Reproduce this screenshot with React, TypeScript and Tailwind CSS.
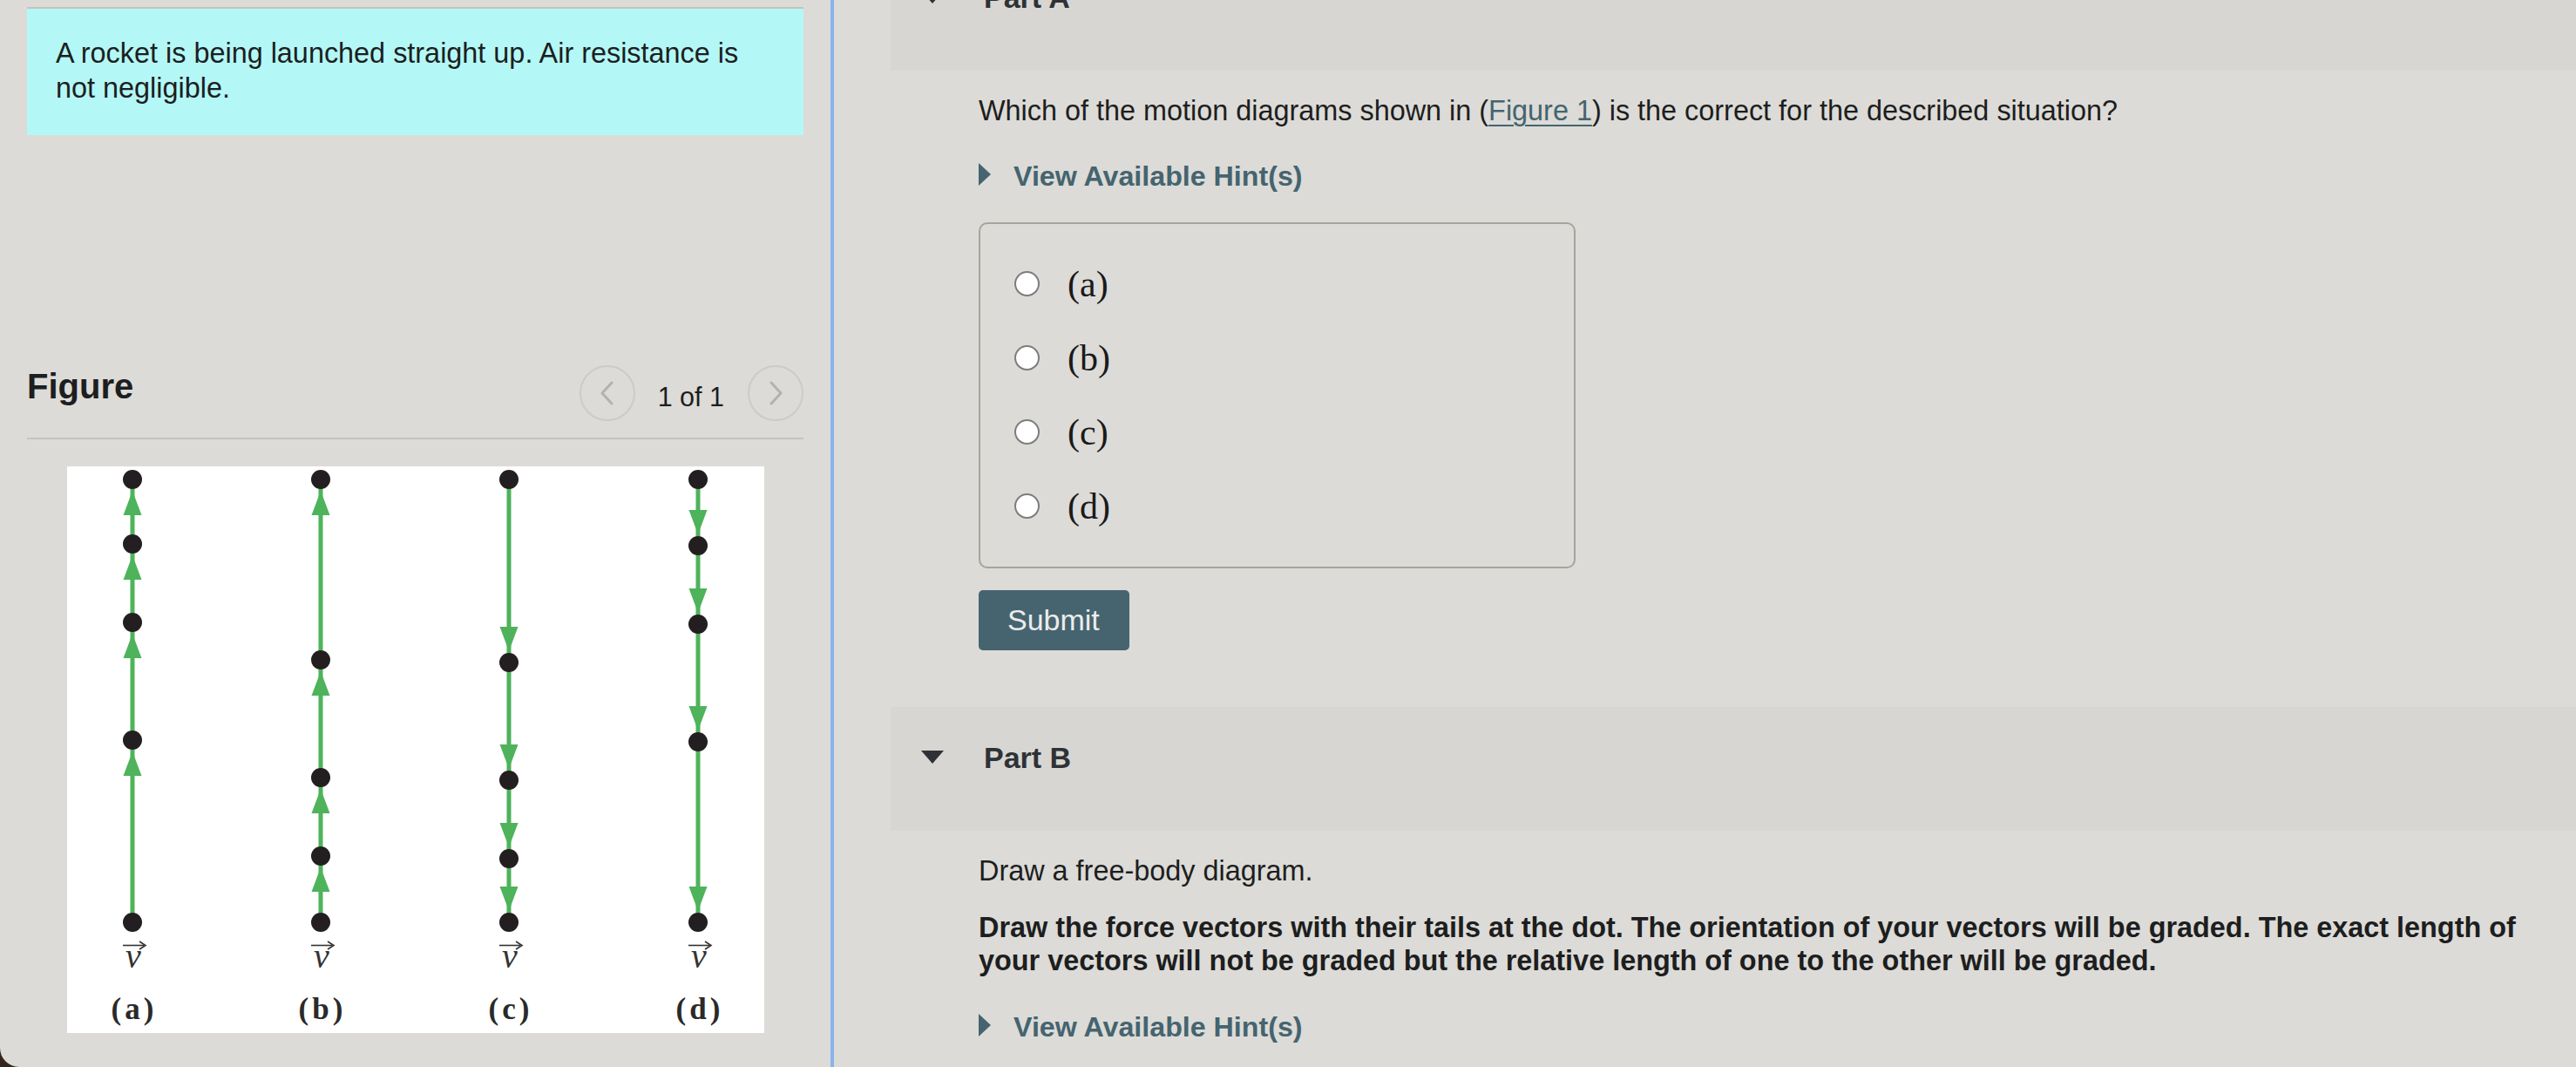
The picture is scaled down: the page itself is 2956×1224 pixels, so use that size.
import React from "react";

type Column = {
  x: number;
  ys: number[];
  up: boolean;
  label: string;
};

const columns: Column[] = [
  { x: 75, ys: [15, 89, 179, 314, 523], up: true, label: "(a)" },
  { x: 291, ys: [15, 222, 357, 447, 523], up: true, label: "(b)" },
  { x: 507, ys: [15, 225, 360, 450, 523], up: false, label: "(c)" },
  { x: 724, ys: [15, 91, 181, 316, 523], up: false, label: "(d)" },
];

const options = ["(a)", "(b)", "(c)", "(d)"];

const MotionDiagrams = () => {
  return (
    <svg width="800" height="650" viewBox="0 0 800 650" className="block bg-white">
      {columns.map((col) => {
        const heads = col.ys.slice(0, -1).map((top, i) => {
          const bottom = col.ys[i + 1];
          const tip = col.up ? top + 13 : bottom - 13;
          const base = col.up ? tip + 28 : tip - 28;
          return `${col.x},${tip} ${col.x - 10.5},${base} ${col.x + 10.5},${base}`;
        });
        return (
          <g key={col.label}>
            <line
              x1={col.x}
              y1={col.ys[0]}
              x2={col.x}
              y2={col.ys[col.ys.length - 1]}
              stroke="#4eb35b"
              strokeWidth="5"
            />
            {heads.map((pts) => (
              <polygon key={pts} points={pts} fill="#4eb35b" />
            ))}
            {col.ys.map((y) => (
              <circle key={y} cx={col.x} cy={y} r="11" fill="#231f20" />
            ))}
            {/* velocity label */}
            <line x1={col.x - 11} y1="549.5" x2={col.x + 13} y2="549.5" stroke="#333" strokeWidth="1.6" />
            <polyline
              points={`${col.x + 8},545 ${col.x + 15},549.5 ${col.x + 8},554`}
              fill="none"
              stroke="#333"
              strokeWidth="1.6"
            />
            <text
              x={col.x + 1}
              y="575"
              textAnchor="middle"
              fontFamily="'Liberation Serif', 'Times New Roman', serif"
              fontStyle="italic"
              fontSize="40"
              fill="#333"
            >
              v
            </text>
            <text
              x={col.x + 2}
              y="634"
              textAnchor="middle"
              fontFamily="'Liberation Serif', 'Times New Roman', serif"
              fontWeight="bold"
              fontSize="35"
              letterSpacing="4"
              fill="#2a2a2a"
            >
              {col.label}
            </text>
          </g>
        );
      })}
    </svg>
  );
};

const PagerButton = ({ dir }: { dir: "prev" | "next" }) => (
  <button className="flex h-[64px] w-[64px] shrink-0 items-center justify-center rounded-full border-2 border-[#cdcbc7]">
    <svg width="18" height="28" viewBox="0 0 18 28">
      <polyline
        points={dir === "prev" ? "14,2 3,14 14,26" : "4,2 15,14 4,26"}
        fill="none"
        stroke="#b4b2ae"
        strokeWidth="3"
        strokeLinecap="round"
        strokeLinejoin="round"
      />
    </svg>
  </button>
);

const DownTriangle = () => (
  <svg width="26" height="15" viewBox="0 0 26 15" className="mt-[12px] shrink-0">
    <polygon points="0,0 26,0 13,15" fill="#2e3236" />
  </svg>
);

const HintLink = () => (
  <div className="flex items-start">
    <svg width="14" height="26" viewBox="0 0 14 26" className="mt-[5px] shrink-0">
      <polygon points="0,0 14,13 0,26" fill="#45646f" />
    </svg>
    <span className="ml-[26px] text-[32.2px] font-bold leading-[40px] text-[#45646f]">View Available Hint(s)</span>
  </div>
);

const PartHeader = ({ title }: { title: string }) => (
  <div className="flex h-[142px] items-start bg-[#d7d6d2] pl-[35px] pt-[38px]">
    <DownTriangle />
    <h2 className="ml-[46px] text-[34px] font-bold leading-[40px] text-[#2e3236]">{title}</h2>
  </div>
);

const App = () => {
  return (
    <div className="h-[1224px] w-[2956px] overflow-hidden bg-[#35261c]">
      <div className="flex h-full overflow-hidden rounded-bl-[22px] bg-[#dcdbd7] font-['Liberation_Sans',Arial,sans-serif] text-[#1d1e20]">
        {/* left: problem statement and figure */}
        <aside className="w-[953px] shrink-0 px-[31px] pt-[8px]">
          <div className="border-t-2 border-[#c5c3be] bg-[#b3f8f7] px-[33px] pb-[34px] pt-[31px] text-[32.4px] leading-[40px]">
            A rocket is being launched straight up. Air resistance is not negligible.
          </div>

          <div className="mt-[264px] flex h-[64px] items-start justify-between">
            <h2 className="text-[40px] font-bold leading-[48px]">Figure</h2>
            <div className="flex items-start">
              <PagerButton dir="prev" />
              <span className="ml-[26px] mt-[18px] text-[30.5px] leading-[36px]">1 of 1</span>
              <div className="ml-[27px]">
                <PagerButton dir="next" />
              </div>
            </div>
          </div>
          <div className="mt-[19px] h-[2px] bg-[#c6c4bf]" />

          <div className="mx-auto mt-[31px] w-[800px]">
            <MotionDiagrams />
          </div>
        </aside>

        <div className="w-[4px] shrink-0 bg-[#8ab3ec]" />

        {/* right: parts */}
        <main className="-mt-[61px] flex-1 pl-[65px]">
          <PartHeader title="Part A" />
          <div className="pl-[101px]">
            <p className="mt-[26px] text-[32.4px] leading-[40px]">
              Which of the motion diagrams shown in (
              <a className="text-[#45646f] underline decoration-2 underline-offset-[5px]">Figure 1</a>) is the correct
              for the described situation?
            </p>
            <div className="mt-[35px]">
              <HintLink />
            </div>

            <div className="mt-[33px] h-[397px] w-[685px] rounded-[10px] border-2 border-[#a8a39d] pl-[39px] pt-[26px]">
              {options.map((opt) => (
                <label key={opt} className="flex h-[85px] items-center">
                  <span className="h-[29px] w-[29px] shrink-0 rounded-full border-[2.5px] border-[#7d7d7d] bg-white" />
                  <span className="ml-[32px] font-['Liberation_Serif','Times_New_Roman',serif] text-[42px] leading-none text-[#1a1a1a]">
                    {opt}
                  </span>
                </label>
              ))}
            </div>

            <button className="mt-[25px] flex h-[69px] w-[173px] items-center rounded-[5px] bg-[#46646f] pl-[33px] text-[34px] text-[#ececec]">
              Submit
            </button>
          </div>

          <div className="mt-[65px]">
            <PartHeader title="Part B" />
          </div>
          <div className="pl-[101px]">
            <p className="mt-[26px] text-[32.4px] leading-[40px]">Draw a free-body diagram.</p>
            <p className="mt-[26px] text-[32.4px] font-bold leading-[38px]">
              Draw the force vectors with their tails at the dot. The orientation of your vectors will be graded. The
              exact length of
              <br />
              your vectors will not be graded but the relative length of one to the other will be graded.
            </p>
            <div className="mt-[37px]">
              <HintLink />
            </div>
          </div>
        </main>
      </div>
    </div>
  );
};

export default App;
